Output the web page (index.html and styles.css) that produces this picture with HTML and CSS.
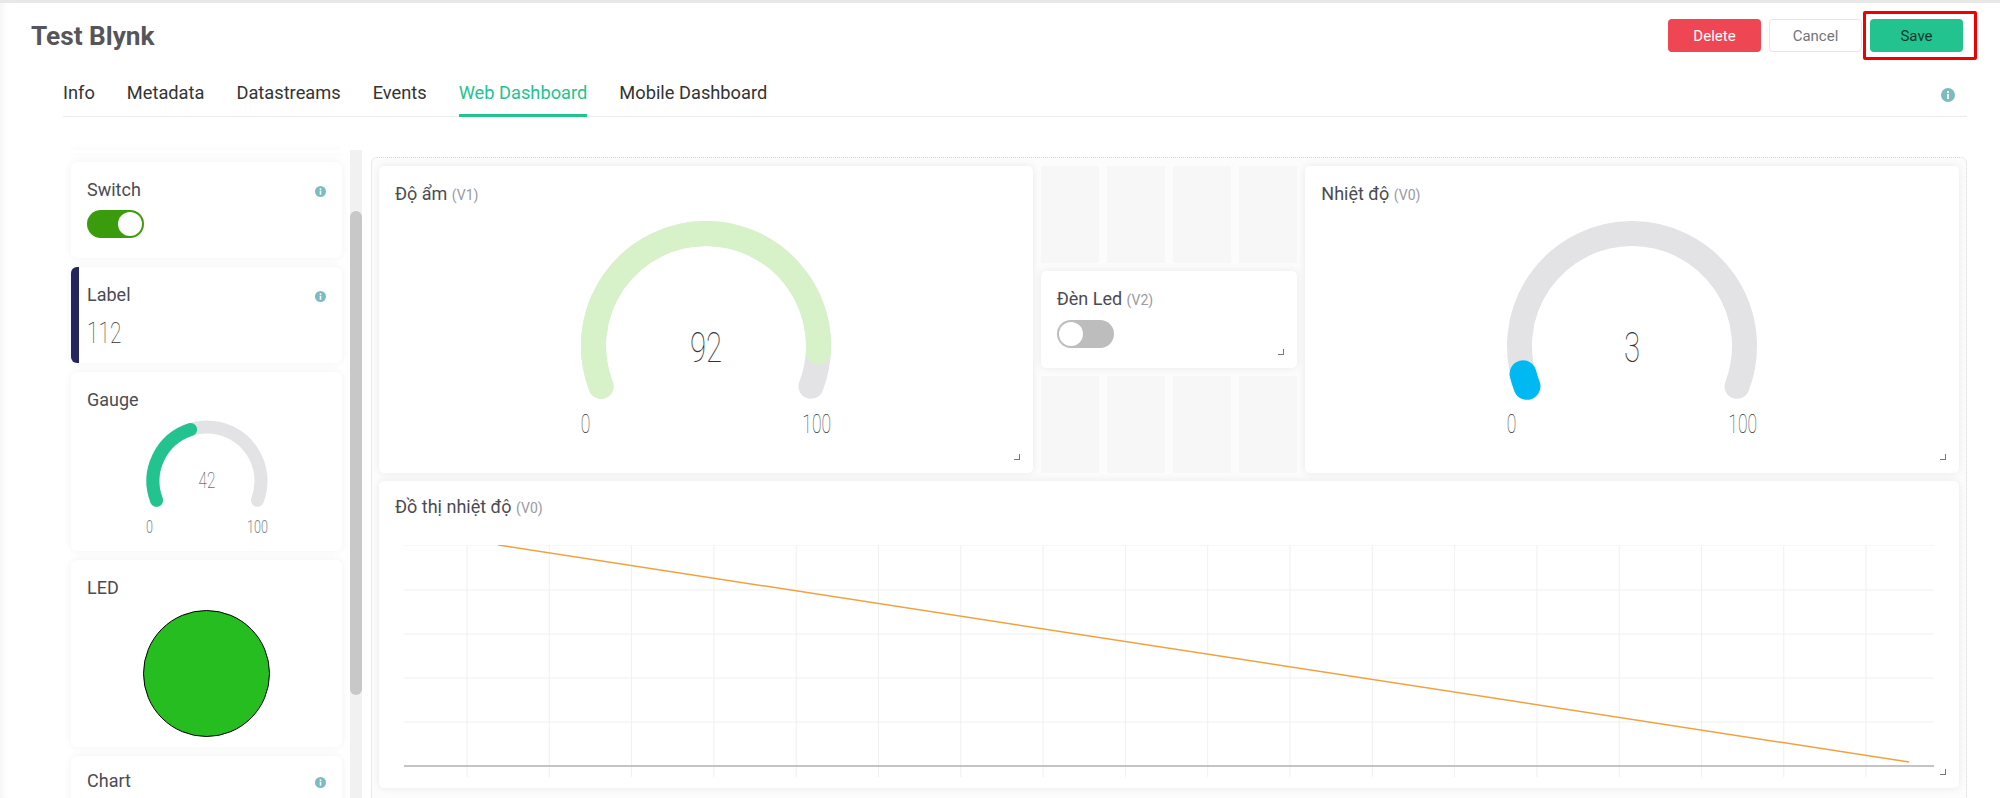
FILE: index.html
```html
<!DOCTYPE html>
<html lang="en">
<head>
    <meta charset="UTF-8">
    <meta name="viewport" content="width=device-width, initial-scale=1.0">
    <title>Test Blynk</title>
    <link rel="stylesheet" href="styles.css">
</head>
<body>
    <svg class="defs" width="0" height="0">
        <symbol id="info" viewBox="0 0 14 14">
            <circle cx="7" cy="7" r="7" fill="#7bbcc1"/>
            <rect x="6" y="6" width="2" height="5" fill="#fff"/>
            <rect x="6" y="3" width="2" height="2" fill="#fff"/>
        </symbol>
    </svg>
    <div class="page">
        <header class="top-bar">
            <h1>Test Blynk</h1>
            <div class="actions">
                <button class="btn btn-delete" type="button">Delete</button>
                <button class="btn btn-cancel" type="button">Cancel</button>
                <button class="btn btn-save" type="button">Save</button>
            </div>
        </header>

        <nav class="tabs">
            <a>Info</a>
            <a>Metadata</a>
            <a>Datastreams</a>
            <a>Events</a>
            <a class="active">Web Dashboard</a>
            <a>Mobile Dashboard</a>
            <svg class="tabs-info"><use href="#info"/></svg>
        </nav>

        <div class="workspace">
            <aside class="sidebar">
                <div class="tiles">
                    <div class="tile tile-stub"></div>
                    <div class="tile tile-switch">
                        <div class="tile-head">Switch <svg class="info"><use href="#info"/></svg></div>
                        <div class="toggle toggle-on"></div>
                    </div>
                    <div class="tile tile-label">
                        <div class="tile-head">Label <svg class="info"><use href="#info"/></svg></div>
                        <div class="thin-value"><span>112</span></div>
                    </div>
                    <div class="tile tile-gauge">
                        <div class="tile-head">Gauge</div>
                        <svg class="gauge-small" viewBox="0 0 124 130">
                            <path class="arc arc-track" stroke-width="13" d="M11.6 81.35A54 54 0 1 1 112.4 81.35"/>
                            <path class="arc" stroke="#22c38e" stroke-width="13" pathLength="100" stroke-dasharray="42 200" d="M11.6 81.35A54 54 0 1 1 112.4 81.35"/>
                            <text class="thin" font-size="22" transform="translate(62 69) scale(.7 1)">42</text>
                            <text class="thin thin-limit" font-size="18" transform="translate(4.5 113.5) scale(.7 1)">0</text>
                            <text class="thin thin-limit" font-size="18" transform="translate(112.5 113.5) scale(.7 1)">100</text>
                        </svg>
                    </div>
                    <div class="tile tile-led">
                        <div class="tile-head">LED</div>
                        <div class="led"></div>
                    </div>
                    <div class="tile tile-chart">
                        <div class="tile-head">Chart <svg class="info"><use href="#info"/></svg></div>
                    </div>
                </div>
                <div class="scroll-track"><div class="scroll-thumb"></div></div>
            </aside>

            <section class="board">
                <div class="grid">
                    <div class="widget widget-gauge">
                        <div class="widget-title">Độ ẩm <small>(V1)</small></div>
                        <svg class="gauge" viewBox="0 0 260 230">
                            <path class="arc arc-track" stroke-width="25" d="M24.97 170.3A112.5 112.5 0 1 1 235.03 170.3"/>
                            <path class="arc" stroke="#d7f1c9" stroke-width="25" pathLength="100" stroke-dasharray="92 200" d="M24.97 170.3A112.5 112.5 0 1 1 235.03 170.3"/>
                            <text class="thin" font-size="42" transform="translate(130 146) scale(.7 1)">92</text>
                            <text class="thin" font-size="25" transform="translate(9.5 217) scale(.7 1)">0</text>
                            <text class="thin" font-size="25" transform="translate(240.7 217) scale(.7 1)">100</text>
                        </svg>
                        <i class="resize"></i>
                    </div>
                    <div class="cell"></div>
                    <div class="cell"></div>
                    <div class="cell"></div>
                    <div class="cell"></div>
                    <div class="widget widget-gauge">
                        <div class="widget-title">Nhiệt độ <small>(V0)</small></div>
                        <svg class="gauge" viewBox="0 0 260 230">
                            <path class="arc arc-track" stroke-width="25" d="M24.97 170.3A112.5 112.5 0 1 1 235.03 170.3"/>
                            <path class="arc" stroke="#00b9f2" stroke-width="27" pathLength="100" stroke-dasharray="3 200" d="M24.97 170.3A112.5 112.5 0 1 1 235.03 170.3"/>
                            <text class="thin" font-size="42" transform="translate(130 146) scale(.7 1)">3</text>
                            <text class="thin" font-size="25" transform="translate(9.5 217) scale(.7 1)">0</text>
                            <text class="thin" font-size="25" transform="translate(240.7 217) scale(.7 1)">100</text>
                        </svg>
                        <i class="resize"></i>
                    </div>
                    <div class="widget widget-switch">
                        <div class="widget-title">Đèn Led <small>(V2)</small></div>
                        <div class="toggle toggle-off"></div>
                        <i class="resize"></i>
                    </div>
                    <div class="cell"></div>
                    <div class="cell"></div>
                    <div class="cell"></div>
                    <div class="cell"></div>
                    <div class="widget widget-chart">
                        <div class="widget-title">Đồ thị nhiệt độ <small>(V0)</small></div>
                        <svg class="chart" viewBox="0 0 1534 234">
                            <path class="chart-grid" d="M0 0H1530M0 45H1530M0 89H1530M0 133H1530M0 177H1530"/>
                            <path class="chart-grid" d="M63 0V232M145.3 0V232M227.6 0V232M309.9 0V232M392.2 0V232M474.5 0V232M556.8 0V232M639.1 0V232M721.4 0V232M803.7 0V232M886 0V232M968.3 0V232M1050.6 0V232M1132.9 0V232M1215.2 0V232M1297.5 0V232M1379.8 0V232M1462 0V232"/>
                            <path class="chart-axis" d="M0 221H1530"/>
                            <path class="chart-line" d="M94 0L1505 217"/>
                        </svg>
                        <i class="resize"></i>
                    </div>
                </div>
            </section>
        </div>
    </div>
</body>
</html>
```

FILE: styles.css
```css
* {
    box-sizing: border-box;
}
html, body {
    margin: 0;
    height: 798px;
    overflow: hidden;
    background-color: #fff;
}
body {
    font-family: Roboto, "Liberation Sans", sans-serif;
    color: #4b4b52;
}
.defs {
    display: block;
    height: 0;
}
.page {
    height: 798px;
    overflow: hidden;
    border-top: 3px solid #e8e8e8;
    box-shadow: inset 8px 0 8px -6px rgba(0, 0, 0, 0.05);
}

/* header */
.top-bar {
    display: flex;
    justify-content: space-between;
    align-items: center;
    height: 33px;
    margin-top: 16px;
    padding: 0 37px 0 31px;
}
.top-bar h1 {
    margin: 0;
    font-size: 26.2px;
    font-weight: 700;
    color: #55555b;
}
.actions {
    display: flex;
    gap: 8px;
}
.btn {
    width: 93px;
    height: 33px;
    border: 1px solid transparent;
    border-radius: 4px;
    font-family: inherit;
    font-size: 15px;
}
.btn-delete {
    background-color: #ef4653;
    color: #fff;
}
.btn-cancel {
    background-color: #fff;
    border-color: #e6e6e6;
    color: #74747a;
}
.btn-save {
    position: relative;
    background-color: #22c38e;
    color: #10382c;
}
.btn-save::after {
    content: "";
    position: absolute;
    inset: -9px -15px -9px -8px;
    border: 3px solid #f00000;
    border-radius: 2px;
}

/* tabs */
.tabs {
    display: flex;
    align-items: center;
    gap: 32px;
    height: 43px;
    margin: 22px 33px 0 63px;
    border-bottom: 1px solid #ececec;
    font-size: 18.25px;
    color: #333;
}
.tabs a {
    display: flex;
    align-items: center;
    height: 43px;
    padding-bottom: 5px;
}
.tabs a.active {
    color: #22c38e;
    border-bottom: 3px solid #22c38e;
    padding-bottom: 2px;
}
.tabs-info {
    width: 14px;
    height: 14px;
    margin-left: auto;
    margin-right: 12px;
}

/* left panel */
.workspace {
    display: flex;
    height: 650px;
    margin-top: 33px;
    padding-left: 71px;
}
.sidebar {
    display: flex;
    gap: 8px;
    flex: 0 0 291px;
}
.tiles {
    display: flex;
    flex-direction: column;
    gap: 9px;
    flex: 0 0 271px;
}
.tile {
    flex: none;
    padding: 16px 16px 0;
    background-color: #fff;
    border-radius: 6px;
    box-shadow: 0 0 8px rgba(0, 0, 0, 0.06);
}
.tile-stub {
    height: 3px;
    padding: 0;
}
.tile-switch, .tile-label {
    height: 96px;
}
.tile-label {
    padding-left: 8px;
    border-left: 8px solid #24255e;
}
.tile-gauge {
    height: 179px;
}
.tile-led {
    height: 187px;
}
.tile-chart {
    height: 80px;
    padding-top: 13px;
}
.tile-head {
    display: flex;
    justify-content: space-between;
    align-items: center;
    height: 22px;
    font-size: 18px;
}
.info {
    width: 11px;
    height: 11px;
    margin-top: 4px;
}
.thin-value {
    margin-top: 10px;
    font-size: 30px;
    line-height: 36px;
    font-weight: 100;
    color: #333;
}
.thin-value span {
    display: inline-block;
    transform: scaleX(0.7);
    transform-origin: left;
}
.gauge-small {
    display: block;
    width: 124px;
    height: 130px;
    margin: 9px auto 0;
    overflow: visible;
}
.led {
    width: 127px;
    height: 127px;
    margin: 12px auto 0;
    border: 1.5px solid #000;
    border-radius: 50%;
    background-color: #25bd1f;
}
.scroll-track {
    flex: 0 0 12px;
    height: 650px;
    padding-top: 61px;
    background-color: #f1f1f1;
}
.scroll-thumb {
    height: 484px;
    background-color: #c8c8c8;
    border-radius: 6px;
}

/* toggles */
.toggle {
    display: flex;
    width: 57px;
    height: 28px;
    margin-top: 10px;
    padding: 2px;
    border-radius: 14px;
}
.toggle::after {
    content: "";
    width: 24px;
    height: 24px;
    border-radius: 50%;
    background-color: #fff;
}
.toggle-on {
    justify-content: flex-end;
    background-color: #3a9c0c;
}
.toggle-off {
    background-color: #bdbdbd;
}

/* dashboard */
.board {
    flex: 0 0 1596px;
    height: 660px;
    margin-left: 9px;
    margin-top: 7px;
    padding: 8px 7px;
    border: 1px dotted #d5d5d5;
    border-radius: 6px;
    background-color: #fcfcfc;
}
.grid {
    display: grid;
    grid-template-columns: repeat(24, 1fr);
    grid-auto-rows: 96.5px;
    gap: 8.5px 8px;
}
.cell {
    background-color: #f7f7f7;
}
.widget {
    position: relative;
    padding: 17px 16px 0;
    background-color: #fff;
    border-radius: 5px;
    box-shadow: 0 0 8px rgba(0, 0, 0, 0.08);
}
.widget-gauge {
    grid-column: span 10;
    grid-row: span 3;
}
.widget-switch {
    grid-column: span 4;
    padding-top: 17px;
}
.widget-chart {
    grid-column: span 24;
    grid-row: span 3;
    padding-top: 15px;
}
.widget-title {
    height: 22px;
    line-height: 22px;
    font-size: 18px;
    color: #4b4b52;
}
.widget-title small {
    font-size: 14px;
    color: #9a9a9f;
}
.gauge {
    display: block;
    width: 260px;
    height: 230px;
    margin: 11px auto 0;
    overflow: visible;
}
.arc {
    fill: none;
    stroke-linecap: round;
}
.arc-track {
    stroke: #e3e3e5;
}
.thin {
    font-weight: 100;
    fill: #333;
    text-anchor: middle;
}
.thin-limit {
    font-weight: 300;
    fill: #7f8b90;
}
.chart {
    display: block;
    width: 1534px;
    height: 234px;
    margin: 27px 0 0 9px;
}
.chart-grid {
    fill: none;
    stroke: #f0f0f0;
    stroke-width: 1;
}
.chart-axis {
    fill: none;
    stroke: #b0b0b0;
    stroke-width: 1.5;
}
.chart-line {
    fill: none;
    stroke: #f0a23e;
    stroke-width: 1.5;
}
.resize {
    position: absolute;
    right: 13px;
    bottom: 13px;
    width: 6px;
    height: 6px;
    border-right: 1.5px solid #777;
    border-bottom: 1.5px solid #777;
}
```
